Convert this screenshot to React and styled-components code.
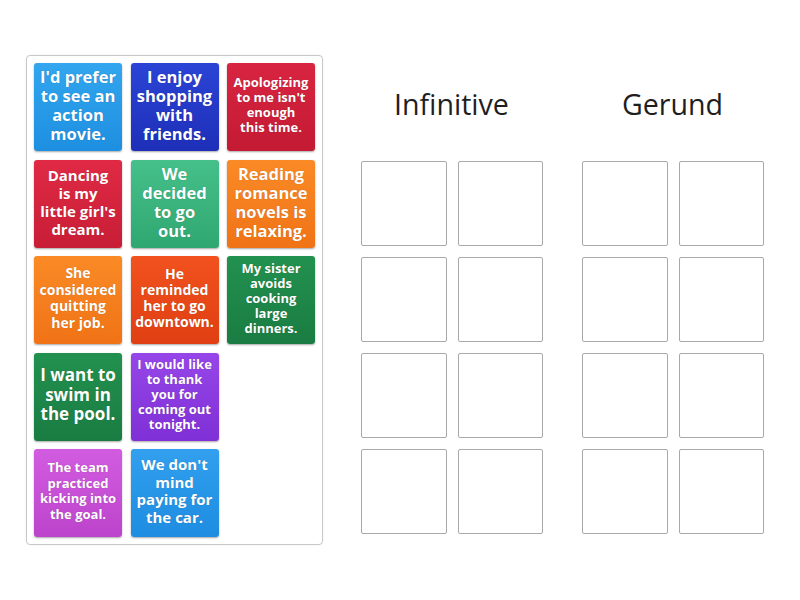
import React from "react";
import styled, { createGlobalStyle } from "styled-components";

const Global = createGlobalStyle`
  html, body { margin: 0; padding: 0; background: #fff; }
  body { font-family: "Open Sans", "Liberation Sans", sans-serif; }
`;

const Page = styled.div`
  display: flex;
  align-items: flex-start;
  padding: 55px 0 0 26px;
  width: 800px;
  height: 600px;
  box-sizing: border-box;
`;

const Panel = styled.div`
  box-sizing: border-box;
  width: 297px;
  border: 1px solid #c8c8c8;
  border-radius: 4px;
  padding: 7px;
  display: grid;
  grid-template-columns: repeat(3, 88px);
  grid-auto-rows: 88px;
  gap: 8.5px;
  box-shadow: 0 0 2px rgba(0, 0, 0, 0.08);
`;

const Card = styled.div`
  border-radius: 3px;
  background: linear-gradient(to bottom, ${(p) => p.$top}, ${(p) => p.$bottom});
  box-shadow: 0 1px 2px rgba(0, 0, 0, 0.35);
  color: #fff;
  font-weight: 700;
  font-size: ${(p) => p.$size}px;
  line-height: ${(p) => p.$lh}px;
  text-align: center;
  display: flex;
  flex-direction: column;
  align-items: center;
  justify-content: center;
  padding: 0 2px 4px;
  box-sizing: border-box;
  white-space: nowrap;
  text-shadow: 0 0 1px rgba(0, 0, 0, 0.25);
  overflow: hidden;
`;

const Line = styled.span`
  display: block;
`;

const EmptyCell = styled.div``;

const Groups = styled.div`
  display: flex;
  gap: 40px;
  margin-left: 38px;
`;

const Group = styled.div`
  display: flex;
  flex-direction: column;
  width: 181px;
`;

const Heading = styled.div`
  margin-top: 29px;
  height: 40px;
  line-height: 40px;
  font-size: 28.6px;
  font-weight: 400;
  color: #1e1e1e;
  text-align: center;
`;

const Slots = styled.div`
  margin-top: 37px;
  display: grid;
  grid-template-columns: repeat(2, 85.5px);
  grid-auto-rows: 85px;
  column-gap: 11px;
  row-gap: 11px;
`;

const Slot = styled.div`
  border: 1px solid #a9a9a9;
  border-radius: 2px;
  box-sizing: border-box;
  background: #fff;
`;

const cards = [
  { l: ["I'd prefer", "to see an", "action", "movie."], top: "#32a6ef", bottom: "#1e8fe0", s: 16.5, lh: 19 },
  { l: ["I enjoy", "shopping", "with", "friends."], top: "#2b44d6", bottom: "#1e2fb8", s: 16.5, lh: 19 },
  { l: ["Apologizing", "to me isn't", "enough", "this time."], top: "#d82541", bottom: "#c41a33", s: 13, lh: 15 },
  { l: ["Dancing", "is my", "little girl's", "dream."], top: "#e02a45", bottom: "#c81d36", s: 15, lh: 18 },
  { l: ["We", "decided", "to go", "out."], top: "#46c08a", bottom: "#2fa771", s: 16.5, lh: 19 },
  { l: ["Reading", "romance", "novels is", "relaxing."], top: "#fa8a26", bottom: "#f07316", s: 16.5, lh: 19 },
  { l: ["She", "considered", "quitting", "her job."], top: "#fa8a26", bottom: "#f07316", s: 14, lh: 16.5 },
  { l: ["He", "reminded", "her to go", "downtown."], top: "#f2521e", bottom: "#df3f12", s: 14, lh: 16 },
  { l: ["My sister", "avoids", "cooking", "large", "dinners."], top: "#22914f", bottom: "#1a7c42", s: 13, lh: 15 },
  { l: ["I want to", "swim in", "the pool."], top: "#22914f", bottom: "#1a7c42", s: 17, lh: 19.5 },
  { l: ["I would like", "to thank", "you for", "coming out", "tonight."], top: "#9646e8", bottom: "#7f30d6", s: 13, lh: 15 },
  null,
  { l: ["The team", "practiced", "kicking into", "the goal."], top: "#d25ce0", bottom: "#bc44cc", s: 13, lh: 15.5 },
  { l: ["We don't", "mind", "paying for", "the car."], top: "#32a0ee", bottom: "#1e8ce0", s: 15, lh: 17.5 },
];

const groups = ["Infinitive", "Gerund"];

export default function App() {
  return (
    <>
      <Global />
      <Page>
        <Panel>
          {cards.map((c, i) =>
            c ? (
              <Card key={i} $top={c.top} $bottom={c.bottom} $size={c.s} $lh={c.lh}>
                {c.l.map((line, j) => (
                  <Line key={j}>{line}</Line>
                ))}
              </Card>
            ) : (
              <EmptyCell key={i} />
            )
          )}
        </Panel>
        <Groups>
          {groups.map((g) => (
            <Group key={g}>
              <Heading>{g}</Heading>
              <Slots>
                {Array.from({ length: 8 }).map((_, i) => (
                  <Slot key={i} />
                ))}
              </Slots>
            </Group>
          ))}
        </Groups>
      </Page>
    </>
  );
}
